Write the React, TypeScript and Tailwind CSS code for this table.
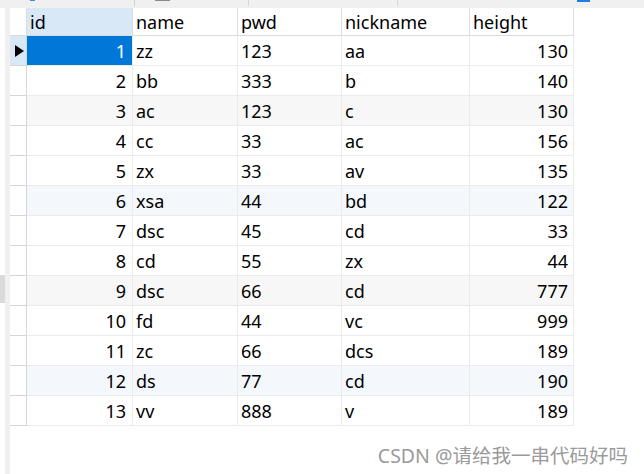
import React from "react";

type Row = { id: number; name: string; pwd: string; nickname: string; height: number };

const rows: Row[] = [
  { id: 1, name: "zz", pwd: "123", nickname: "aa", height: 130 },
  { id: 2, name: "bb", pwd: "333", nickname: "b", height: 140 },
  { id: 3, name: "ac", pwd: "123", nickname: "c", height: 130 },
  { id: 4, name: "cc", pwd: "33", nickname: "ac", height: 156 },
  { id: 5, name: "zx", pwd: "33", nickname: "av", height: 135 },
  { id: 6, name: "xsa", pwd: "44", nickname: "bd", height: 122 },
  { id: 7, name: "dsc", pwd: "45", nickname: "cd", height: 33 },
  { id: 8, name: "cd", pwd: "55", nickname: "zx", height: 44 },
  { id: 9, name: "dsc", pwd: "66", nickname: "cd", height: 777 },
  { id: 10, name: "fd", pwd: "44", nickname: "vc", height: 999 },
  { id: 11, name: "zc", pwd: "66", nickname: "dcs", height: 189 },
  { id: 12, name: "ds", pwd: "77", nickname: "cd", height: 190 },
  { id: 13, name: "vv", pwd: "888", nickname: "v", height: 189 },
];

// every third row gets a tint, alternating grey / blue
function rowBg(i: number) {
  if ((i + 1) % 6 === 3) return "bg-[#f7f7f7]";
  if ((i + 1) % 6 === 0) return "bg-[#f4f8fd]";
  return "bg-white";
}

const cell = "h-[30px] border-b border-r border-[#ebebeb] pt-[1px] leading-[28px] whitespace-nowrap overflow-hidden";
const head = "h-[28px] border-b border-r border-[#dcdcdc] pt-[1px] leading-[26px] pl-[3px]";

export default function App() {
  return (
    <div className="relative w-[644px] h-[474px] bg-white overflow-hidden text-[18px] text-black font-['Noto_Sans',sans-serif]">
      {/* clipped toolbar above */}
      <div className="flex h-[8px] bg-[#f0f0f0]">
        <div className="w-[30px]" />
        <div className="w-[5px] h-[1px] bg-[#3d8ee0]" />
        <div className="w-[99px]" />
        <div className="w-[1px] h-[6px] bg-[#d0d0d0]" />
        <div className="w-[20px]" />
        <div className="w-[15px] h-[1px] bg-[#8a8a8a]" />
        <div className="w-[78px]" />
        <div className="w-[1px] h-[6px] bg-[#d6d6d6]" />
        <div className="w-[148px]" />
        <div className="w-[1px] h-[6px] bg-[#d6d6d6]" />
        <div className="w-[179px]" />
        <div className="w-[13px] h-[2px] bg-[#1f7de0]" />
      </div>

      <div className="flex">
        <div className="flex w-[10px] h-[466px]">
          <div className="w-[5px]">
            <div className="mt-[267px] h-[28px] bg-[#dadada]" />
          </div>
          <div className="w-[5px] bg-[#f0f0f0]" />
        </div>

        <div className="grid grid-cols-[17px_106px_105px_104px_128px_104px] content-start">
          <div className={`${head} border-[#d4d4d4]`} />
          <div className={`${head} bg-[#d9e8f7]`}>id</div>
          <div className={head}>name</div>
          <div className={head}>pwd</div>
          <div className={head}>nickname</div>
          <div className={head}>height</div>

          {rows.map((r, i) => (
            <React.Fragment key={r.id}>
              <div
                className={`h-[30px] border-b border-r border-[#d6d6d6] flex items-center pl-[5px] pt-[1px] ${
                  i === 0 ? "bg-[#d9e8f7]" : "bg-white"
                }`}
              >
                {i === 0 && (
                  <div className="w-0 h-0 border-y-[6px] border-y-transparent border-l-[9px] border-l-black" />
                )}
              </div>
              <div
                className={`${cell} text-right pr-[6px] ${
                  i === 0 ? "bg-[#0078d7] text-white" : rowBg(i)
                }`}
              >
                {r.id}
              </div>
              <div className={`${cell} pl-[3px] ${rowBg(i)}`}>{r.name}</div>
              <div className={`${cell} pl-[3px] ${rowBg(i)}`}>{r.pwd}</div>
              <div className={`${cell} pl-[3px] ${rowBg(i)}`}>{r.nickname}</div>
              <div className={`${cell} text-right pr-[5px] ${rowBg(i)}`}>{r.height}</div>
            </React.Fragment>
          ))}
        </div>
      </div>

      <div className="absolute right-[16px] bottom-[6px] text-[19.5px] leading-[24px] text-[#9a9a9a] font-['Noto_Sans','Noto_Sans_CJK_SC',sans-serif]">
        CSDN @请给我一串代码好吗
      </div>
    </div>
  );
}
